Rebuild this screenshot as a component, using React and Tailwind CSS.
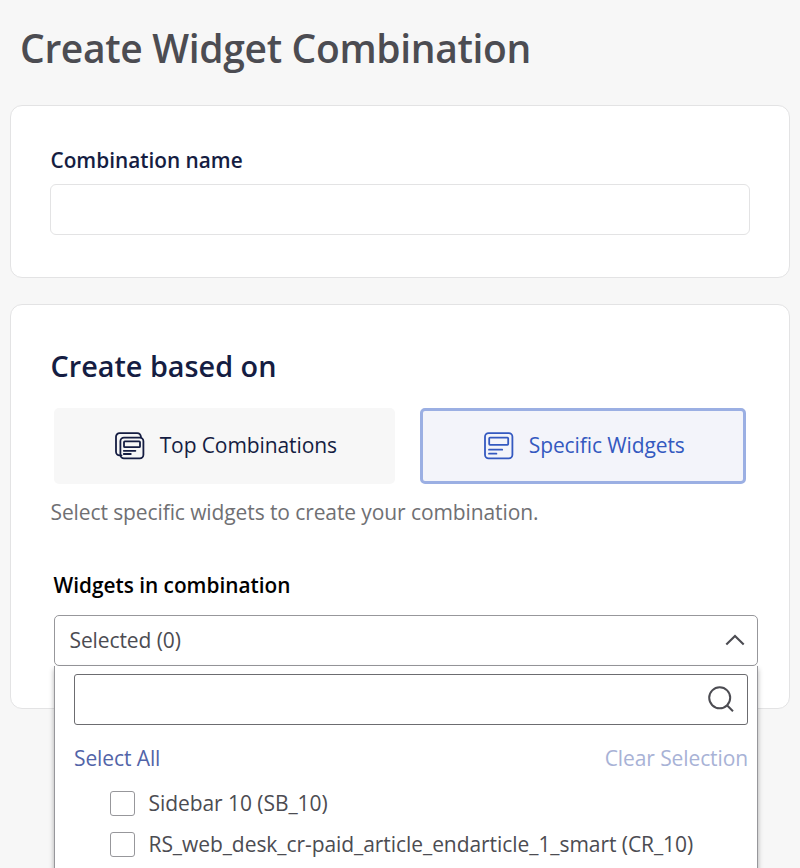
import { useState } from 'react'

const widgets = [
  { id: 'SB_10', label: 'Sidebar 10 (SB_10)' },
  { id: 'CR_10', label: 'RS_web_desk_cr-paid_article_endarticle_1_smart (CR_10)' },
]

function TopCombinationsIcon() {
  return (
    <svg width="30" height="28" viewBox="0 0 30 28" fill="none" stroke="currentColor" strokeWidth="1.8" strokeLinecap="round" strokeLinejoin="round">
      <path d="M6.5 23.3H4.6C2.6 23.3 1 21.7 1 19.7V4.8C1 2.8 2.6 1.2 4.6 1.2H22.2C24.3 1.2 25.7 2.8 26 5.2" />
      <rect x="5.4" y="5.6" width="23" height="20.8" rx="3.6" />
      <rect x="9" y="9.4" width="16" height="5.8" rx="0.8" />
      <path d="M8.8 18.8H20.4M8.8 22H15.8" />
    </svg>
  )
}

function SpecificWidgetsIcon() {
  return (
    <svg width="30" height="28" viewBox="0 0 30 28" fill="none" stroke="currentColor" strokeWidth="1.8" strokeLinecap="round" strokeLinejoin="round">
      <rect x="1" y="1.2" width="27.4" height="25.2" rx="3.6" />
      <rect x="5.2" y="5.6" width="19" height="7.2" rx="0.8" />
      <path d="M5 17.7H18.2M5 21.7H12.4" />
    </svg>
  )
}

function WidgetOption({ label }) {
  const [checked, setChecked] = useState(false)

  return (
    <label className="flex h-[41px] items-center gap-[13.5px] pl-9 cursor-pointer">
      <input
        type="checkbox"
        checked={checked}
        onChange={() => setChecked(!checked)}
        className="h-[25px] w-[25px] shrink-0 appearance-none rounded-[3px] border border-[#97979b] bg-white checked:bg-[#3459bd]"
      />
      <span className="whitespace-nowrap pb-px text-[21px] leading-7 tracking-[-0.06px]">{label}</span>
    </label>
  )
}

export default function App() {
  const [mode, setMode] = useState('specific')
  const [open, setOpen] = useState(true)

  const tab = 'flex h-[76px] items-center justify-center gap-[14.5px] rounded-[5px] pl-[3px] text-[21px] tracking-[-0.1px] cursor-pointer'
  const active = 'border-3 border-[#9bafe3] bg-[#f3f4fa] text-[#3459c0]'
  const idle = 'bg-[#f7f7f7] text-[#151d42]'

  return (
    <div className="h-[868px] overflow-hidden bg-[#f7f7f7] px-2.5 font-['Open_Sans',sans-serif] text-[#4c4c52]">
      <h1 className="mb-[27px] px-2.5 pt-[18px] text-[39px] font-semibold leading-[60px] tracking-[-0.34px]">Create Widget Combination</h1>

      <section className="h-[173px] rounded-xl border border-[#e3e3e4] bg-white px-[39px] pt-10">
        <label htmlFor="name" className="mb-[10px] block pl-[0.5px] text-[20.8px] font-semibold leading-7 text-[#151d42]">
          Combination name
        </label>
        <input id="name" type="text" className="block h-[51px] w-full rounded-md border border-[#e3e3e4] px-4 text-[21px] outline-none" />
      </section>

      <section className="mt-[26px] h-[405px] rounded-xl border border-[#e3e3e4] bg-white px-[39px] pt-[41px]">
        <h2 className="pl-[0.5px] text-[28.8px] font-semibold leading-10 text-[#151d42]">Create based on</h2>

        <div className="mt-[22px] flex gap-[25px] px-1">
          <button type="button" onClick={() => setMode('top')} className={`${tab} w-[341px] ${mode === 'top' ? active : idle}`}>
            <TopCombinationsIcon />
            Top Combinations
          </button>
          <button type="button" onClick={() => setMode('specific')} className={`${tab} w-[326px] ${mode === 'specific' ? active : idle}`}>
            <SpecificWidgetsIcon />
            Specific Widgets
          </button>
        </div>

        <p className="mt-[14px] pl-[0.5px] text-[21px] leading-7 tracking-[-0.1px] text-[#707073]">Select specific widgets to create your combination.</p>

        <h3 className="mb-4 ml-[3.5px] mt-[45px] text-[20.8px] font-semibold leading-7 text-black">Widgets in combination</h3>

        <div className="relative ml-1 w-[704px]">
          <button
            type="button"
            onClick={() => setOpen(!open)}
            className="flex h-[51px] w-full items-center justify-between rounded-[5px] border border-[#97979b] bg-white pl-[14.5px] pr-3 text-[21px] tracking-[-0.1px] cursor-pointer"
          >
            Selected (0)
            <svg width="20" height="12" viewBox="0 0 20 12" fill="none" stroke="currentColor" strokeWidth="2.1" className="mb-px">
              <path d="M1.3 10.6L10 1.9L18.7 10.6" />
            </svg>
          </button>

          {open && (
            <div className="absolute left-0 top-full h-[300px] w-full border-x border-[#97979b] bg-white pl-[19px] pr-[9px] pt-2 shadow-[0_3px_5px_rgba(0,0,0,0.3)]">
              <div className="flex h-[51px] items-center rounded-[3px] border border-[#6c6c70] pr-[13px]">
                <input type="text" className="h-full min-w-0 flex-1 px-3 text-[21px] outline-none" />
                <svg width="27" height="27" viewBox="0 0 27 27" fill="none" stroke="currentColor" strokeWidth="2">
                  <circle cx="12.7" cy="11.8" r="10.5" />
                  <path d="M19.7 19L26 25.3" />
                </svg>
              </div>

              <div className="mb-[11px] mt-[19px] flex justify-between text-[21px] leading-7 tracking-[-0.1px]">
                <button type="button" className="text-[#5264a8] cursor-pointer">Select All</button>
                <button type="button" className="text-[#a8b2d6]">Clear Selection</button>
              </div>

              {widgets.map((w) => (
                <WidgetOption key={w.id} label={w.label} />
              ))}
            </div>
          )}
        </div>
      </section>
    </div>
  )
}
